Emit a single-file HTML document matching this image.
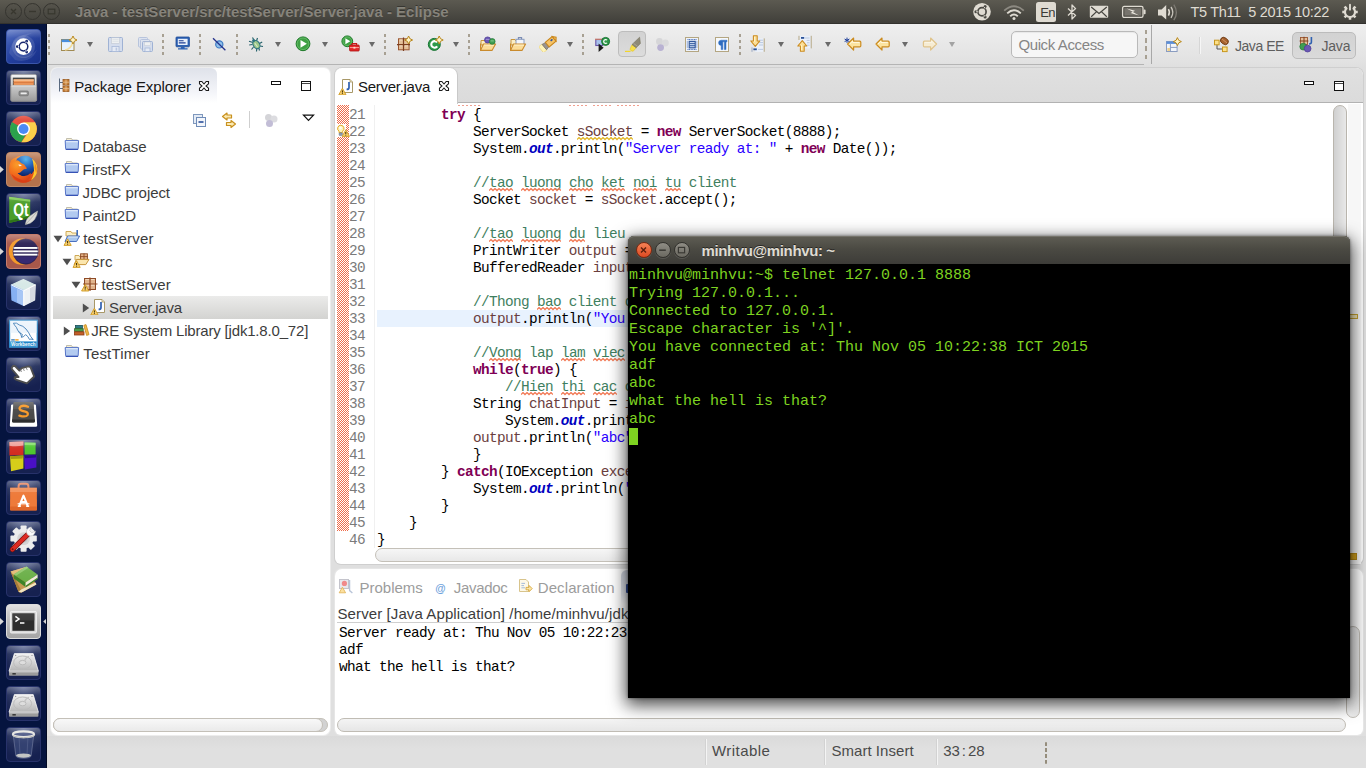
<!DOCTYPE html>
<html>
<head>
<meta charset="utf-8">
<title>Eclipse</title>
<style>
*{box-sizing:border-box;margin:0;padding:0}
html,body{width:1366px;height:768px;overflow:hidden;background:#dedede;font-family:"Liberation Sans",sans-serif;}
.abs{position:absolute}
#root{position:absolute;left:0;top:0;width:1366px;height:768px;overflow:hidden;background:#dfdfdf}
/* top panel */
#panel{left:0;top:0;width:1366px;height:24px;background:linear-gradient(#5c5a51,#3f3e39);}
#panel .title{left:75px;top:2px;font-size:15px;font-weight:bold;color:#86837b;white-space:nowrap;line-height:20px;letter-spacing:0px}
.wbtn{width:17px;height:17px;border-radius:50%;top:3px;border:1px solid #35342f;background:linear-gradient(#55534b,#46453f)}
/* launcher */
#launcher{left:0;top:24px;width:47px;height:744px;background:#05143f}
.tile{left:6px;width:35px;height:35px;border-radius:4px;background:linear-gradient(#2a3466,#151d4e);box-shadow:inset 0 0 0 1px rgba(255,255,255,.10)}
/* toolbar */
#toolbar{left:47px;top:24px;width:1319px;height:44px;background:linear-gradient(#efefef,#e1e1e1 90%,#dfdfdf)}
.tsep{top:33px;width:2px;height:22px;background:repeating-linear-gradient(#a09889 0 3px,transparent 3px 6.1px);opacity:.9}
.dd{width:0;height:0;border-left:3.5px solid transparent;border-right:3.5px solid transparent;border-top:5px solid #6a6a6a;top:42px}
/* views */
.view{background:#fff;border-radius:6px 6px 3px 3px;box-shadow:0 0 0 1px #ececec}
.ui{font-size:15px;color:#3c3c3c;white-space:nowrap;line-height:20px}
.mono{font-family:"Liberation Mono",monospace;white-space:pre}

.ln{font-size:14.4px;letter-spacing:-.642px;line-height:17px;height:17px;color:#7a7a7a}
.code{font-size:14.4px;letter-spacing:-.642px;line-height:17px;height:17px;color:#000}
.code b{font-weight:bold}
.k{color:#7f0055}.s{color:#2a00ff}.v{color:#6a3e3e}.c{color:#3f7f5f}.o{color:#0000c0;font-style:italic}
.term{font-size:15px;letter-spacing:0;line-height:18px;height:18px;color:#7ed321}
</style>
</head>
<body>
<div id="root">

<!-- ECLIPSE TOOLBAR -->
<div id="toolbar" class="abs"></div>
<div class="abs tsep" style="left:47.7px;top:33.8px"></div>
<svg class="abs" style="left:60px;top:35px" width="18" height="17" viewBox="0 0 18 17"><rect x="1.5" y="4.5" width="12.5" height="11" fill="#eaf3fc" stroke="#a08a52" stroke-width="1"/><rect x="1.5" y="4.5" width="12.5" height="2.6" fill="#4a8fdc"/><path d="M5 15Q11 14 12.5 8" stroke="#f4dd9a" stroke-width="1.6" fill="none"/><path d="M13 1l1.3 2.7l2.7 1.3l-2.7 1.3l-1.3 2.7l-1.3-2.7l-2.7-1.3l2.7-1.3z" fill="#fdf3c8" stroke="#b8861a" stroke-width="1" stroke-linejoin="round"/></svg>
<div class="abs dd" style="left:87px;opacity:1"></div>
<svg class="abs" style="left:107px;top:36px" width="17" height="17" viewBox="0 0 17 17"><path d="M2.5 1.5H14.5Q15.5 1.5 15.5 2.5V14.5Q15.5 15.5 14.5 15.5H2.5Q1.5 15.5 1.5 14.5V2.5Q1.5 1.5 2.5 1.5Z" fill="#d5dded" stroke="#9fb2d4" stroke-width="1"/><rect x="4.5" y="1.8" width="8" height="5.6" fill="#eef0f2" stroke="#c2c8d2" stroke-width=".6"/><path d="M5.5 3.5H11.5M5.5 5.3H11.5" stroke="#d8dce2" stroke-width=".7"/><rect x="5" y="10.5" width="7" height="5" fill="#e6ebf5" stroke="#a9b9d8" stroke-width=".8"/><rect x="8.6" y="11.6" width="1.6" height="3" fill="#b8c6e0"/></svg>
<svg class="abs" style="left:137px;top:36px" width="17" height="17" viewBox="0 0 17 17"><rect x="1.5" y="1.5" width="9" height="9.5" rx="1" fill="#dde3ef" stroke="#b2c0da" stroke-width=".9"/><rect x="3.5" y="3.5" width="9" height="9.5" rx="1" fill="#dde3ef" stroke="#b2c0da" stroke-width=".9"/><rect x="5.5" y="5.5" width="10" height="10" rx="1" fill="#d5dded" stroke="#9fb2d4" stroke-width="1"/><rect x="7.5" y="6" width="6" height="3.6" fill="#eef0f2" stroke="#c2c8d2" stroke-width=".5"/><rect x="8" y="12" width="5" height="3.5" fill="#e6ebf5" stroke="#a9b9d8" stroke-width=".8"/></svg>
<div class="abs tsep" style="left:161.7px;top:33.8px"></div>
<svg class="abs" style="left:175px;top:36px" width="16" height="15" viewBox="0 0 16 15"><rect x="1" y="1" width="13.4" height="9.8" rx=".8" fill="#2d62b4" stroke="#1d4a94" stroke-width=".8"/><rect x="2.8" y="2.8" width="9.8" height="6.2" fill="#e8effa"/><path d="M3.8 4.8H8.6M3.8 6.9H10.6" stroke="#1c3f94" stroke-width="1.1"/><path d="M5.8 11v1.2H3v1.3h9.6v-1.3H9.6V11z" fill="#2d62b4"/></svg>
<div class="abs tsep" style="left:198.7px;top:33.8px"></div>
<svg class="abs" style="left:212px;top:37px" width="15" height="15" viewBox="0 0 15 15"><circle cx="7.3" cy="7.4" r="3.6" fill="#8fc0ea" stroke="#3f7cc4" stroke-width="1.2"/><path d="M1 1.2L13.4 13.2" stroke="#26338c" stroke-width="1.3"/></svg>
<div class="abs tsep" style="left:235.7px;top:33.8px"></div>
<svg class="abs" style="left:248px;top:36px" width="17" height="17" viewBox="0 0 17 17"><path d="M4.5 1.5L6.5 5M9.5 2L8.5 5M1 5.2L5 6.5M14.2 6L11.5 7.5M1.2 9L4.5 8.5M15 10.5L12 10M3.5 13.5L5.5 11M8.5 15.5L8.8 12.5M11.5 14.5L10.8 12" stroke="#24606a" stroke-width="1.15" fill="none"/><ellipse cx="8.4" cy="8.6" rx="3.2" ry="4.4" transform="rotate(-32 8.4 8.6)" fill="#9cc68a" stroke="#2e7480" stroke-width="1.1"/><path d="M6.8 7.2L9.6 11" stroke="#d4eac8" stroke-width="1.1"/><circle cx="5.6" cy="4.6" r="1.5" fill="#2e7480"/></svg>
<div class="abs dd" style="left:275px;opacity:1"></div>
<svg class="abs" style="left:295px;top:36px" width="16" height="16" viewBox="0 0 16 16"><circle cx="8" cy="7.8" r="6.9" fill="#3fa044" stroke="#1f7a2a" stroke-width="1"/><circle cx="8" cy="7.8" r="5.800000000000001" fill="none" stroke="#6cc26e" stroke-width=".7"/><path d="M5.516 3.935999999999999V11.664000000000001L11.864 7.8Z" fill="#fff"/></svg>
<div class="abs dd" style="left:322px;opacity:1"></div>
<svg class="abs" style="left:341px;top:35px" width="20" height="17" viewBox="0 0 20 17"><circle cx="6.3" cy="6.3" r="5.4" fill="#3fa044" stroke="#1f7a2a" stroke-width="1"/><circle cx="6.3" cy="6.3" r="4.300000000000001" fill="none" stroke="#6cc26e" stroke-width=".7"/><path d="M4.356 3.2759999999999994V9.324L9.324 6.3Z" fill="#fff"/><rect x="8.6" y="10" width="9.6" height="6" rx=".8" fill="#e02828" stroke="#b01010" stroke-width=".8"/><path d="M11.2 10V8.6H15.6V10" fill="none" stroke="#c81818" stroke-width="1.1"/><path d="M8.8 12.6H18" stroke="#ffb0a8" stroke-width=".9"/><rect x="12.4" y="11.8" width="2" height="1.8" fill="#ffd8d0"/></svg>
<div class="abs dd" style="left:369px;opacity:1"></div>
<div class="abs tsep" style="left:383.7px;top:33.8px"></div>
<svg class="abs" style="left:396px;top:35px" width="18" height="17" viewBox="0 0 18 17"><rect x="2.5" y="3.8" width="10.6" height="11" fill="#e4bf98" stroke="#9a5630" stroke-width="1"/><path d="M7.5 2.5V16M1 9.6H14" stroke="#7c3e1e" stroke-width="1.2"/><path d="M3.6 5H6.4M8.8 5H12M3.6 10.9H6.4M8.8 10.9H12" stroke="#f6e2cc" stroke-width=".9"/><path d="M12.6 1l1.3 2.7l2.7 1.3l-2.7 1.3l-1.3 2.7l-1.3-2.7l-2.7-1.3l2.7-1.3z" fill="#fdf3c8" stroke="#b8861a" stroke-width="1" stroke-linejoin="round"/></svg>
<svg class="abs" style="left:427px;top:35px" width="17" height="17" viewBox="0 0 17 17"><circle cx="7.3" cy="9.4" r="6" fill="#2e9a4a" stroke="#1a7434" stroke-width="1"/><path d="M10.2 7.4A3.3 3.3 0 1 0 10.2 11.4" fill="none" stroke="#fff" stroke-width="2.1"/><path d="M12.2 1l1.3 2.7l2.7 1.3l-2.7 1.3l-1.3 2.7l-1.3-2.7l-2.7-1.3l2.7-1.3z" fill="#fdf3c8" stroke="#b8861a" stroke-width="1" stroke-linejoin="round"/></svg>
<div class="abs dd" style="left:453px;opacity:1"></div>
<div class="abs tsep" style="left:467.7px;top:33.8px"></div>
<svg class="abs" style="left:479px;top:35px" width="18" height="17" viewBox="0 0 18 17"><path d="M2 5.5H7L8 7H13V10H2Z" fill="#fbeec4" stroke="#c9963c" stroke-width="1"/><path d="M1.5 15V8.5" stroke="#c98a2c" stroke-width="1"/><path d="M4.4 9H16.6L13 15.4H1.5Z" fill="#fbdc98" stroke="#c98a2c" stroke-width="1.1" stroke-linejoin="round"/><path d="M5 10.1H15" stroke="#fff2cc" stroke-width=".9"/><circle cx="8.6" cy="5" r="3.1" fill="#6a58b4" stroke="#4a3a94" stroke-width=".7"/><circle cx="13.2" cy="6.4" r="2.9" fill="#3f9e52" stroke="#247a38" stroke-width=".7"/><path d="M6.8 4.4H10.4" stroke="#a89ad8" stroke-width=".9"/><path d="M11.6 5.9H14.8" stroke="#8cd09a" stroke-width=".9"/></svg>
<svg class="abs" style="left:509px;top:36px" width="18" height="16" viewBox="0 0 18 16"><path d="M2 3.5H6L7 5H9V9H2Z" fill="#fbeec4" stroke="#c9963c" stroke-width="1"/><rect x="7" y="3.3" width="8" height="6" fill="#f2f5fb" stroke="#8a9cc0" stroke-width="1"/><path d="M9.4 3.3V1.6H12.6V3.3" fill="none" stroke="#7a8cb4" stroke-width="1.1"/><path d="M1.5 14V7.5" stroke="#c98a2c" stroke-width="1"/><path d="M4.4 8H16.6L13 14.4H1.5Z" fill="#fbdc98" stroke="#c98a2c" stroke-width="1.1" stroke-linejoin="round"/><path d="M5 9.1H15" stroke="#fff2cc" stroke-width=".9"/></svg>
<svg class="abs" style="left:539px;top:35px" width="19" height="17" viewBox="0 0 19 17"><g transform="rotate(-40 9 9)"><rect x="0" y="5.2" width="4.6" height="7.6" fill="#fff4b8" stroke="#e8d070" stroke-width=".6"/><path d="M4.2 5.6L8 6.4V11.6L4.2 12.4Z" fill="#9a948e" stroke="#7a746e" stroke-width=".8"/><rect x="8" y="6" width="9" height="6" fill="#f6c366" stroke="#c8861c" stroke-width="1"/><path d="M17 6L19.6 9L17 12Z" fill="#f6c366" stroke="#c8861c" stroke-width="1"/><rect x="13" y="7.6" width="2.4" height="1.4" fill="#2a4ea0"/></g></svg>
<div class="abs dd" style="left:567px;opacity:1"></div>
<div class="abs tsep" style="left:581.7px;top:33.8px"></div>
<svg class="abs" style="left:594px;top:36px" width="17" height="17" viewBox="0 0 17 17"><rect x="1.8" y="3.5" width="7" height="6" fill="#a8c2ec" stroke="#6a54a8" stroke-width="1.1"/><path d="M1 3.3H9.6" stroke="#c87a6a" stroke-width="1.2"/><path d="M4.6 7.5V16L9.6 11.8Z" fill="#1a1a1a"/><circle cx="11.6" cy="5.4" r="4" fill="#2e9a4a" stroke="#1a7434" stroke-width="1"/><path d="M13 4.2A1.9 1.9 0 1 0 13 6.8" fill="none" stroke="#fff" stroke-width="1.2"/></svg>
<div class="abs" style="left:618px;top:31px;width:28px;height:26px;border-radius:4px;background:linear-gradient(#d2d2d2,#dcdcdc);border:1px solid #bdbdbd"></div>
<svg class="abs" style="left:624px;top:36px" width="18" height="17" viewBox="0 0 18 17"><path d="M1 15.4H6.5" stroke="#f2d62a" stroke-width="1.2"/><path d="M6 13.2L8 8.6L12.2 11.8L9.2 15.2Q7 15.6 6 13.2Z" fill="#f7e04a" stroke="#e4c420" stroke-width=".6"/><path d="M8 8.6L15.6 1.2L16.4 7.4L12.2 11.8Z" fill="#8e8a78" stroke="#76725e" stroke-width=".6"/><path d="M9.6 7.4L13.6 10.4" stroke="#b4b09c" stroke-width=".8"/></svg>
<svg class="abs" style="left:655px;top:37px" width="15" height="15" viewBox="0 0 15 15"><circle cx="4.4" cy="4.4" r="3.4" fill="#d6d6d8"/><circle cx="10.4" cy="6" r="3.4" fill="#dadadc"/><circle cx="5.6" cy="10.6" r="3.4" fill="#b9b2d2"/></svg>
<svg class="abs" style="left:684px;top:36px" width="16" height="17" viewBox="0 0 16 17"><rect x="1.5" y="1.5" width="13" height="14" fill="#eef3fb" stroke="#b4a682" stroke-width="1"/><path d="M3.5 3.6H12.5M3.5 13.4H12.5" stroke="#3a62b0" stroke-width="1" stroke-dasharray="1 .6"/><rect x="5.2" y="5.4" width="6" height="6.4" fill="#c9d8f0" stroke="#2a5298" stroke-width="1.1"/><path d="M5.4 7.6H11M5.4 9.7H11" stroke="#2a5298" stroke-width=".9"/><path d="M3.3 5.5V12" stroke="#3a62b0" stroke-width=".9" stroke-dasharray="1 1"/><path d="M12.9 5.5V12" stroke="#3a62b0" stroke-width=".9" stroke-dasharray="1 1"/></svg>
<svg class="abs" style="left:714px;top:36px" width="16" height="17" viewBox="0 0 16 17"><rect x="1.5" y="1.5" width="13" height="14" fill="#f6f9fd" stroke="#b4a682" stroke-width="1"/><path d="M13 4.2H7.2A2.6 2.6 0 0 0 7.2 9.4V13.6H8.8V5.8H10.4V13.6H12V5.8H13Z" fill="#2d6cc0" stroke="#2d6cc0" stroke-width=".5"/></svg>
<div class="abs tsep" style="left:738.7px;top:33.8px"></div>
<svg class="abs" style="left:750px;top:35px" width="16" height="18" viewBox="0 0 16 18"><rect x="5.2" y="3.4" width="9" height="13.4" fill="#eaf0fa"/><path d="M14.2 3.4V16.8" stroke="#b4a682" stroke-width="1"/><path d="M2 12.4V16.8" stroke="#9aa8c4" stroke-width="1"/><path d="M9 5.2H13M9 7.6H13M9 10H13M8 14.4H13" stroke="#b6c4de" stroke-width=".9"/><rect x="3.4" y="13.4" width="3.4" height="1.8" fill="#2a5298"/><path d="M3.4 .8H7.2V6H9.8L5.3 11.4L.8 6H3.4Z" fill="#fce09a" stroke="#cc8c20" stroke-width="1.1" stroke-linejoin="round"/><path d="M4.5 1.8V7" stroke="#fff2c4" stroke-width="1"/></svg>
<div class="abs dd" style="left:778px;opacity:1"></div>
<svg class="abs" style="left:797px;top:35px" width="16" height="18" viewBox="0 0 16 18"><rect x="2" y=".8" width="12" height="12.6" fill="#eaf0fa"/><path d="M14.2 .8V13.4M2 .8V5" stroke="#b4a682" stroke-width="1"/><path d="M8 3H12.6M9.6 5.4H12.6M10 7.8H12.6M10 10.2H12.6" stroke="#b6c4de" stroke-width=".9"/><rect x="4" y="2" width="3.2" height="1.8" fill="#2a5298"/><path d="M3.4 16.2H7.2V11H9.8L5.3 5.6L.8 11H3.4Z" fill="#fce09a" stroke="#cc8c20" stroke-width="1.1" stroke-linejoin="round"/><path d="M4.5 15.2V10" stroke="#fff2c4" stroke-width="1"/></svg>
<div class="abs dd" style="left:825px;opacity:1"></div>
<svg class="abs" style="left:844px;top:37px" width="18" height="14" viewBox="0 0 18 14"><g transform="translate(2.6 0)"><path d="M7 1L1 7L7 13V9.8H13.2Q14.2 9.8 14.2 8.8V5.2Q14.2 4.2 13.2 4.2H7Z" fill="#fce4a0" stroke="#cc8c20" stroke-width="1.2" stroke-linejoin="round"/><path d="M3 7L6 4.2V5.4H12.8" stroke="#fffae4" stroke-width="1" fill="none"/></g><path d="M3 .6V5.8M.6 2L5.4 4.6M5.4 2L.6 4.6" stroke="#1e3f9a" stroke-width="1"/></svg>
<svg class="abs" style="left:875px;top:37px" width="16" height="14" viewBox="0 0 16 14"><path d="M7 1L1 7L7 13V9.8H13.2Q14.2 9.8 14.2 8.8V5.2Q14.2 4.2 13.2 4.2H7Z" fill="#fce4a0" stroke="#cc8c20" stroke-width="1.2" stroke-linejoin="round"/><path d="M3 7L6 4.2V5.4H12.8" stroke="#fffae4" stroke-width="1" fill="none"/></svg>
<div class="abs dd" style="left:902px;opacity:1"></div>
<svg class="abs" style="left:922px;top:37px" width="16" height="14" viewBox="0 0 16 14"><g transform="translate(15.6 0) scale(-1 1)"><path d="M7 1L1 7L7 13V9.8H13.2Q14.2 9.8 14.2 8.8V5.2Q14.2 4.2 13.2 4.2H7Z" fill="#f6ecd2" stroke="#e0c48c" stroke-width="1.2" stroke-linejoin="round"/><path d="M3 7L6 4.2V5.4H12.8" stroke="#fbf6e8" stroke-width="1" fill="none"/></g></svg>
<div class="abs dd" style="left:949px;opacity:0.55"></div>
<div class="abs" style="left:1011px;top:31px;width:127px;height:27px;border:1px solid #b9b9b9;border-radius:5px;background:#f6f6f6;box-shadow:inset 0 1px 1px rgba(0,0,0,.06)"></div>
<div class="abs ui" id="qa" style="left:1018.4px;top:34px;font-size:15px;color:#858585;line-height:22px;letter-spacing:-.37px">Quick Access</div>
<div class="abs" style="left:1145px;top:30px;width:2px;height:30px;background:repeating-linear-gradient(#a09889 0 4.3px,transparent 4.3px 8.2px);opacity:.9"></div>
<div class="abs" style="left:48px;top:64px;width:1096px;height:1px;background:#b4b4b4"></div>
<div class="abs" style="left:1151px;top:25px;width:1px;height:39px;background:#a8a8a8"></div>
<svg class="abs" style="left:1165px;top:37px" width="17" height="16" viewBox="0 0 17 16"><rect x="1.5" y="4.5" width="10.6" height="10" fill="#f2f5fa" stroke="#8a9cc0" stroke-width="1"/><rect x="1.5" y="4.5" width="10.6" height="2.4" fill="#5a8ed8"/><path d="M5.4 7V14.5M5.4 10.4H12" stroke="#8a9cc0" stroke-width="1"/><rect x="2.4" y="11" width="2.6" height="3" fill="#f0d088"/><path d="M12.4 0.5999999999999996l1.3 2.7l2.7 1.3l-2.7 1.3l-1.3 2.7l-1.3-2.7l-2.7-1.3l2.7-1.3z" fill="#fdf3c8" stroke="#b8861a" stroke-width="1" stroke-linejoin="round"/></svg>
<div class="abs" style="left:1199px;top:37px;width:1px;height:17px;background:#d6d6d6"></div><div class="abs" style="left:1200px;top:37px;width:1px;height:17px;background:#f6f6f6"></div>
<svg class="abs" style="left:1213px;top:36px" width="17" height="17" viewBox="0 0 17 17"><path d="M4 7.5V13H10" stroke="#555" stroke-width="1" fill="none"/><rect x="1.5" y="4.2" width="4.6" height="4.6" fill="#fbe08a" stroke="#c8961c" stroke-width="1"/><rect x="9.5" y="11" width="4.6" height="4.6" fill="#fbe08a" stroke="#c8961c" stroke-width="1"/><ellipse cx="11.4" cy="5" rx="4.2" ry="3.2" transform="rotate(35 11.4 5)" fill="#a8622e" stroke="#6e3a14" stroke-width=".9"/><path d="M9 3L14 7" stroke="#d8a070" stroke-width=".8"/></svg>
<div class="abs ui" id="jee" style="left:1235px;top:35px;font-size:14px;color:#5e5e5e;line-height:22px;letter-spacing:-.46px">Java EE</div>
<div class="abs" style="left:1292px;top:32px;width:64px;height:27px;border-radius:5px;background:linear-gradient(#d2d2d2,#dadada);border:1px solid #bcbcbc"></div>
<svg class="abs" style="left:1298px;top:36px" width="17" height="17" viewBox="0 0 17 17"><rect x="2.5" y="1.5" width="7" height="7" fill="#e4bf98" stroke="#9a5630" stroke-width=".9"/><path d="M6 .8V9.4M1.6 5H10.4" stroke="#7c3e1e" stroke-width="1"/><path d="M13.4 1v5q0 2-2.4 2" fill="none" stroke="#2f60b0" stroke-width="1.6"/><circle cx="5.2" cy="10.6" r="3.4" fill="#3f9e52" stroke="#247a38" stroke-width=".7"/><circle cx="9.6" cy="12.6" r="3.4" fill="#6a58b4" stroke="#4a3a94" stroke-width=".7"/></svg>
<div class="abs ui" id="jv" style="left:1321.4px;top:35px;font-size:14px;color:#5e5e5e;line-height:22px;letter-spacing:-.18px">Java</div>

<!-- PACKAGE EXPLORER -->
<div class="abs view" style="left:51px;top:68px;width:279px;height:667px;border-radius:6px 6px 7px 7px"></div>
<div class="abs" style="left:51px;top:68px;width:166px;height:35px;border-radius:6px 6px 0 0;background:linear-gradient(#dfe2ea,#f4f5f9 70%,#fff)"></div>
<!-- package icon -->
<svg class="abs" style="left:58px;top:78px" width="12" height="15" viewBox="0 0 12 15">
<path d="M1.5 0.5V13.5M1.5 4.5H5M1.5 10.5H5" stroke="#5a6a80" stroke-width="1" fill="none"/>
<rect x="5" y="1.5" width="6" height="5.5" fill="#c8803a" stroke="#9a5a20" stroke-width=".8"/>
<rect x="5" y="8" width="6" height="5.5" fill="#c8803a" stroke="#9a5a20" stroke-width=".8"/>
<path d="M8 1.5V7M5 4.2H11M8 8V13.5M5 10.7H11" stroke="#f0d0a0" stroke-width=".7"/>
</svg>
<div class="abs ui" id="pe-title" style="left:74.2px;top:77px;color:#161616;font-size:15px;letter-spacing:-.1px">Package Explorer</div>
<svg class="abs" style="left:198px;top:80px" width="12" height="12" viewBox="0 0 12 12"><path d="M1.5 1.5L3.8 1.5L6 4L8.2 1.5L10.5 1.5L10.5 3.8L8 6L10.5 8.2L10.5 10.5L8.2 10.5L6 8L3.8 10.5L1.5 10.5L1.5 8.2L4 6L1.5 3.8Z" fill="#fff" stroke="#1c1c1c" stroke-width="1.1"/></svg>
<div class="abs" style="left:271px;top:81px;width:10px;height:4px;border:1.3px solid #111;background:#fff"></div>
<div class="abs" style="left:301px;top:81px;width:10px;height:10px;border:1.3px solid #111;background:#fff;box-shadow:inset 0 1px 0 #fff,inset 0 2px 0 #444"></div>
<!-- view toolbar icons -->
<svg class="abs" style="left:192px;top:113px" width="15" height="15" viewBox="0 0 15 15">
<rect x="1.5" y="1.5" width="9" height="9" fill="#e4ebf5" stroke="#7f98bd"/>
<rect x="4.5" y="4.5" width="9" height="9" fill="#f3f6fb" stroke="#6f8cb8"/>
<path d="M6.5 9H11.5" stroke="#2a4f9a" stroke-width="1.6"/>
</svg>
<svg class="abs" style="left:221px;top:112px" width="16" height="17" viewBox="0 0 16 17">
<path d="M6 1L1.5 4.5L6 8V6H10.5V3H6Z" fill="#fbe9b0" stroke="#c8901e" stroke-width="1.2" stroke-linejoin="round"/>
<path d="M10 8.5L14.5 12L10 15.5V13.5H5.5V10.5H10Z" fill="#fbe9b0" stroke="#c8901e" stroke-width="1.2" stroke-linejoin="round"/>
</svg>
<div class="abs" style="left:249px;top:111px;width:1px;height:17px;background:#cfcfcf"></div>
<svg class="abs" style="left:264px;top:113px" width="15" height="15" viewBox="0 0 15 15">
<circle cx="4.5" cy="4.5" r="3.5" fill="#d4d4d8"/><circle cx="10" cy="6" r="3.5" fill="#dcdce0"/><circle cx="5.5" cy="10.5" r="3.5" fill="#c2bdd6"/>
</svg>
<svg class="abs" style="left:302px;top:114px" width="13" height="8" viewBox="0 0 13 8"><path d="M1.5 1.2H11.5L6.5 6.3Z" fill="#fff" stroke="#111" stroke-width="1.2" stroke-linejoin="miter"/></svg>
<!-- tree -->
<div class="abs" style="left:53px;top:296px;width:275px;height:23px;background:linear-gradient(#ebebea,#d3d3d1)"></div>
<svg class="abs" style="left:64px;top:137px" width="16" height="14" viewBox="0 0 16 14"><path d="M2.5 1.5H7.5L8.5 3H13.5V4H2.5Z" fill="#f8f0d4" stroke="#b4b0a0" stroke-width=".8"/><path d="M1.2 3.6H14.6L14.2 11.6Q14.1 12.4 13.3 12.4H2.5Q1.7 12.4 1.6 11.6Z" fill="#b2caf0" stroke="#5876c8" stroke-width="1"/><path d="M2 4.7H13.8" stroke="#e6effc" stroke-width="1.1"/><path d="M1.7 12.3H14.1" stroke="#2f4bb0" stroke-width="1.1"/></svg>
<div class="abs ui" id="t0" style="left:82.5px;top:137px;letter-spacing:-0.02px">Database</div>
<svg class="abs" style="left:64px;top:160px" width="16" height="14" viewBox="0 0 16 14"><path d="M2.5 1.5H7.5L8.5 3H13.5V4H2.5Z" fill="#f8f0d4" stroke="#b4b0a0" stroke-width=".8"/><path d="M1.2 3.6H14.6L14.2 11.6Q14.1 12.4 13.3 12.4H2.5Q1.7 12.4 1.6 11.6Z" fill="#b2caf0" stroke="#5876c8" stroke-width="1"/><path d="M2 4.7H13.8" stroke="#e6effc" stroke-width="1.1"/><path d="M1.7 12.3H14.1" stroke="#2f4bb0" stroke-width="1.1"/></svg>
<div class="abs ui" id="t1" style="left:82.5px;top:160px;letter-spacing:-0.0px">FirstFX</div>
<svg class="abs" style="left:64px;top:183px" width="16" height="14" viewBox="0 0 16 14"><path d="M2.5 1.5H7.5L8.5 3H13.5V4H2.5Z" fill="#f8f0d4" stroke="#b4b0a0" stroke-width=".8"/><path d="M1.2 3.6H14.6L14.2 11.6Q14.1 12.4 13.3 12.4H2.5Q1.7 12.4 1.6 11.6Z" fill="#b2caf0" stroke="#5876c8" stroke-width="1"/><path d="M2 4.7H13.8" stroke="#e6effc" stroke-width="1.1"/><path d="M1.7 12.3H14.1" stroke="#2f4bb0" stroke-width="1.1"/></svg>
<div class="abs ui" id="t2" style="left:82.5px;top:183px;letter-spacing:-0.08px">JDBC project</div>
<svg class="abs" style="left:64px;top:206px" width="16" height="14" viewBox="0 0 16 14"><path d="M2.5 1.5H7.5L8.5 3H13.5V4H2.5Z" fill="#f8f0d4" stroke="#b4b0a0" stroke-width=".8"/><path d="M1.2 3.6H14.6L14.2 11.6Q14.1 12.4 13.3 12.4H2.5Q1.7 12.4 1.6 11.6Z" fill="#b2caf0" stroke="#5876c8" stroke-width="1"/><path d="M2 4.7H13.8" stroke="#e6effc" stroke-width="1.1"/><path d="M1.7 12.3H14.1" stroke="#2f4bb0" stroke-width="1.1"/></svg>
<div class="abs ui" id="t3" style="left:82.5px;top:206px;letter-spacing:0.02px">Paint2D</div>
<svg class="abs" style="left:53px;top:235px" width="10" height="8" viewBox="0 0 10 8"><path d="M.5 .8H9.5L5 7.2Z" fill="#4f4f4f"/></svg>
<svg class="abs" style="left:63px;top:229px" width="18" height="17" viewBox="0 0 18 17"><path d="M3 2.5H8L9 4H13.5V7H3Z" fill="#fbeec4" stroke="#c9a24a" stroke-width=".9"/><path d="M14.2 1v5.2q0 2-2.3 2" fill="none" stroke="#3565b5" stroke-width="1.5"/><path d="M4.6 7H16.6L13.6 12.5H2Z" fill="#a8c6ee" stroke="#4a70c0" stroke-width="1" stroke-linejoin="round"/><path d="M5.2 8H15" stroke="#e3eefb" stroke-width=".9"/><path d="M4.6 9.799999999999999l3.6 6.6h-7.2z" fill="#f8d070" stroke="#d09a20" stroke-width=".9" stroke-linejoin="round"/><path d="M4.6 12.0v2.2M4.6 14.799999999999999v.8" stroke="#3a2a00" stroke-width="1"/></svg>
<div class="abs ui" id="t4" style="left:83.2px;top:229px;letter-spacing:0.22px">testServer</div>
<svg class="abs" style="left:62px;top:258px" width="10" height="8" viewBox="0 0 10 8"><path d="M.5 .8H9.5L5 7.2Z" fill="#4f4f4f"/></svg>
<svg class="abs" style="left:72px;top:253px" width="18" height="17" viewBox="0 0 18 17"><path d="M3 2.5H7L8 4H12.5V7H3Z" fill="#fbeec4" stroke="#c9a24a" stroke-width=".9"/><rect x="8.6" y=".8" width="6.8" height="5.6" fill="#e4b48a" stroke="#8c4a22" stroke-width=".9"/><path d="M12 .4V6.6M8 3.6H16" stroke="#8c4a22" stroke-width=".9"/><path d="M4.6 6.4H17L13.8 11.6H2Z" fill="#fbe6ae" stroke="#c8963c" stroke-width="1" stroke-linejoin="round"/><path d="M4.6 7.800000000000001l3.6 6.6h-7.2z" fill="#f8d070" stroke="#d09a20" stroke-width=".9" stroke-linejoin="round"/><path d="M4.6 10.0v2.2M4.6 12.8v.8" stroke="#3a2a00" stroke-width="1"/></svg>
<div class="abs ui" id="t5" style="left:92px;top:252px;letter-spacing:0.3px">src</div>
<svg class="abs" style="left:71px;top:281px" width="10" height="8" viewBox="0 0 10 8"><path d="M.5 .8H9.5L5 7.2Z" fill="#4f4f4f"/></svg>
<svg class="abs" style="left:81px;top:277px" width="17" height="17" viewBox="0 0 17 17"><rect x="3.5" y="1.5" width="11" height="11" fill="#e0b48c" stroke="#8e4a26" stroke-width="1"/><path d="M9 0.5V14M2 7H16.5" stroke="#8e4a26" stroke-width="1.2"/><path d="M4.5 2.5H8M10 2.5H13.5M4.5 8.3H8M10 8.3H13.5" stroke="#f4dcc4" stroke-width=".9"/><path d="M4.2 7.4l3.6 6.6h-7.2z" fill="#f8d070" stroke="#d09a20" stroke-width=".9" stroke-linejoin="round"/><path d="M4.2 9.600000000000001v2.2M4.2 12.4v.8" stroke="#3a2a00" stroke-width="1"/></svg>
<div class="abs ui" id="t6" style="left:101.5px;top:275px;letter-spacing:0.1px">testServer</div>
<svg class="abs" style="left:82px;top:303px" width="8" height="10" viewBox="0 0 8 10"><path d="M.8 .5V9.5L7.2 5Z" fill="#4f4f4f"/></svg>
<svg class="abs" style="left:90px;top:298px" width="17" height="17" viewBox="0 0 17 17"><path d="M4.5 1.5H12L14.5 4V14.5H4.5Z" fill="#fff" stroke="#a89868" stroke-width="1"/><path d="M12 1.5V4H14.5" fill="#f0e8c8" stroke="#a89868" stroke-width=".8"/><path d="M11 4v5.4q0 2-2.4 2" fill="none" stroke="#2f60b0" stroke-width="1.7"/><path d="M4.4 10.2l3.6 6.6h-7.2z" fill="#f8d070" stroke="#d09a20" stroke-width=".9" stroke-linejoin="round"/><path d="M4.4 12.399999999999999v2.2M4.4 15.2v.8" stroke="#3a2a00" stroke-width="1"/></svg>
<div class="abs ui" id="t7" style="left:109.1px;top:298px;letter-spacing:-0.2px">Server.java</div>
<svg class="abs" style="left:63px;top:326px" width="8" height="10" viewBox="0 0 8 10"><path d="M.8 .5V9.5L7.2 5Z" fill="#4f4f4f"/></svg>
<svg class="abs" style="left:72.6px;top:324px" width="17" height="13" viewBox="0 0 17 13"><rect x="2.4" y="1.4" width="7" height="2.8" fill="#2f7f86" stroke="#1d4f58" stroke-width=".8"/><rect x="1.6" y="4.6" width="8.6" height="2.8" fill="#4a9a4a" stroke="#2b642b" stroke-width=".8"/><rect x="1.4" y="7.8" width="9.6" height="3.2" fill="#c4602a" stroke="#8a3c14" stroke-width=".8"/><path d="M10.8 1.4L13 .6L16 10.6L13.6 11.4Z" fill="#f2b84c" stroke="#c58a1a" stroke-width=".8"/></svg>
<div class="abs ui" id="t8" style="left:91.3px;top:321px;letter-spacing:-0.18px">JRE System Library [jdk1.8.0_72]</div>
<svg class="abs" style="left:64px;top:344px" width="16" height="14" viewBox="0 0 16 14"><path d="M2.5 1.5H7.5L8.5 3H13.5V4H2.5Z" fill="#f8f0d4" stroke="#b4b0a0" stroke-width=".8"/><path d="M1.2 3.6H14.6L14.2 11.6Q14.1 12.4 13.3 12.4H2.5Q1.7 12.4 1.6 11.6Z" fill="#b2caf0" stroke="#5876c8" stroke-width="1"/><path d="M2 4.7H13.8" stroke="#e6effc" stroke-width="1.1"/><path d="M1.7 12.3H14.1" stroke="#2f4bb0" stroke-width="1.1"/></svg>
<div class="abs ui" id="t9" style="left:83.3px;top:344px;letter-spacing:0.15px">TestTimer</div>
<!-- hscroll -->
<div class="abs" style="left:53px;top:718px;width:275px;height:14px;border:1px solid #c4c0b8;border-radius:7px;background:#d2d2d2"></div>
<div class="abs" style="left:53px;top:718px;width:270px;height:14px;border:1px solid #c4c0b8;border-radius:7px;background:linear-gradient(#f8f8f8,#eaeaea)"></div>


<!-- EDITOR -->
<div class="abs" style="left:335px;top:68px;width:1028px;height:496px;border-radius:7px 7px 6px 6px;background:#fff;box-shadow:0 0 0 1px #cfcfcf"></div>
<div class="abs" style="left:335px;top:68px;width:1028px;height:35px;border-radius:7px 7px 0 0;background:linear-gradient(#e0e0e0,#dbdbdb);border-bottom:1px solid #b2b2b2"></div>
<div class="abs" style="left:335px;top:68px;width:122px;height:36px;border-radius:7px 7px 0 0;background:#fff;box-shadow:1px 0 0 #c9c9c9"></div>
<svg class="abs" style="left:338px;top:78px" width="17" height="17" viewBox="0 0 17 17"><path d="M4.5 1.5H12L14.5 4V14.5H4.5Z" fill="#fff" stroke="#a89868" stroke-width="1"/><path d="M12 1.5V4H14.5" fill="#f0e8c8" stroke="#a89868" stroke-width=".8"/><path d="M11 4v5.4q0 2-2.4 2" fill="none" stroke="#2f60b0" stroke-width="1.7"/><path d="M4.4 10.2l3.6 6.6h-7.2z" fill="#f8d070" stroke="#d09a20" stroke-width=".9" stroke-linejoin="round"/><path d="M4.4 12.399999999999999v2.2M4.4 15.2v.8" stroke="#3a2a00" stroke-width="1"/></svg>
<div class="abs ui" id="ed-title" style="left:358px;top:77px;color:#161616;font-size:15px;letter-spacing:-.28px">Server.java</div>
<svg class="abs" style="left:438px;top:80px" width="12" height="12" viewBox="0 0 12 12"><path d="M1.5 1.5L3.8 1.5L6 4L8.2 1.5L10.5 1.5L10.5 3.8L8 6L10.5 8.2L10.5 10.5L8.2 10.5L6 8L3.8 10.5L1.5 10.5L1.5 8.2L4 6L1.5 3.8Z" fill="#fff" stroke="#1c1c1c" stroke-width="1.1"/></svg>
<div class="abs" style="left:1304px;top:81px;width:10px;height:4px;border:1.3px solid #111;background:#fff"></div>
<div class="abs" style="left:1334px;top:81px;width:10px;height:10px;border:1.3px solid #111;background:#fff;box-shadow:inset 0 1px 0 #fff,inset 0 2px 0 #444"></div>
<div class="abs" style="left:337px;top:105px;width:12px;height:426px;background:repeating-conic-gradient(#ef6c4a 0 25%,#fff 0 50%) 0 0/2px 2px"></div>
<div class="abs" style="left:337px;top:124px;width:9px;height:13px;background:#fff"></div>
<svg class="abs" style="left:337px;top:123px" width="13" height="16" viewBox="0 0 13 16"><path d="M3.8 2.2A3.3 3.3 0 0 0 2 8.2V9.6H5.6V8.2A3.3 3.3 0 0 0 3.8 2.2Z" fill="#fdf2b8" stroke="#e4a822" stroke-width="1"/><circle cx="3.4" cy="5" r="1.4" fill="#fff" opacity=".8"/><rect x="2.2" y="9.8" width="3.2" height="2.8" rx=".8" fill="#8e9cb0" stroke="#66748a" stroke-width=".6"/><path d="M8.8 6.800000000000001l3.6 6.6h-7.2z" fill="#f8d070" stroke="#d09a20" stroke-width=".9" stroke-linejoin="round"/><path d="M8.8 9.0v2.2M8.8 11.8v.8" stroke="#3a2a00" stroke-width="1"/></svg>
<div class="abs" style="left:374px;top:105px;width:1px;height:443px;background:#f0f0f0"></div>
<div class="abs" style="left:377px;top:310px;width:956px;height:17px;background:#e8f2fe"></div>
<div class="abs" style="left:458px;top:105px;width:24px;height:1px;background:repeating-linear-gradient(90deg,#f0a090 0 2px,transparent 2px 4px)"></div>
<div class="abs" style="left:569px;top:105px;width:18px;height:1px;background:repeating-linear-gradient(90deg,#f0a090 0 2px,transparent 2px 4px)"></div>
<div class="abs" style="left:593px;top:105px;width:18px;height:1px;background:repeating-linear-gradient(90deg,#f0a090 0 2px,transparent 2px 4px)"></div>
<div class="abs" style="left:617px;top:105px;width:24px;height:1px;background:repeating-linear-gradient(90deg,#f0a090 0 2px,transparent 2px 4px)"></div>
<div class="abs mono ln" style="left:349px;top:107px">21</div>
<div class="abs mono code" style="left:377px;top:107px">        <b class="k">try</b> {</div>
<div class="abs mono ln" style="left:349px;top:124px">22</div>
<div class="abs mono code" style="left:377px;top:124px">            ServerSocket <span class="v w">sSocket</span> = <b class="k">new</b> ServerSocket(8888);</div>
<div class="abs mono ln" style="left:349px;top:141px">23</div>
<div class="abs mono code" style="left:377px;top:141px">            System.<b class="o">out</b>.println(<span class="s">"Server ready at: "</span> + <b class="k">new</b> Date());</div>
<div class="abs mono ln" style="left:349px;top:158px">24</div>
<div class="abs mono ln" style="left:349px;top:175px">25</div>
<div class="abs mono code" style="left:377px;top:175px">            <span class="c">//<span class="q">tao</span> <span class="q">luong</span> <span class="q">cho</span> <span class="q">ket</span> <span class="q">noi</span> <span class="q">tu</span> client</span></div>
<div class="abs mono ln" style="left:349px;top:192px">26</div>
<div class="abs mono code" style="left:377px;top:192px">            Socket <span class="v">socket</span> = <span class="v">sSocket</span>.accept();</div>
<div class="abs mono ln" style="left:349px;top:209px">27</div>
<div class="abs mono ln" style="left:349px;top:226px">28</div>
<div class="abs mono code" style="left:377px;top:226px">            <span class="c">//<span class="q">tao</span> <span class="q">luong</span> <span class="q">du</span> lieu</span></div>
<div class="abs mono ln" style="left:349px;top:243px">29</div>
<div class="abs mono code" style="left:377px;top:243px">            PrintWriter <span class="v">output</span> = <b class="k">new</b> PrintWriter(</div>
<div class="abs mono ln" style="left:349px;top:260px">30</div>
<div class="abs mono code" style="left:377px;top:260px">            BufferedReader <span class="v">input</span> = <b class="k">new</b></div>
<div class="abs mono ln" style="left:349px;top:277px">31</div>
<div class="abs mono ln" style="left:349px;top:294px">32</div>
<div class="abs mono code" style="left:377px;top:294px">            <span class="c">//Thong <span class="q">bao</span> client da ket noi</span></div>
<div class="abs mono ln" style="left:349px;top:311px">33</div>
<div class="abs mono code" style="left:377px;top:311px">            <span class="v">output</span>.println(<span class="s">"You have connected</span></div>
<div class="abs mono ln" style="left:349px;top:328px">34</div>
<div class="abs mono ln" style="left:349px;top:345px">35</div>
<div class="abs mono code" style="left:377px;top:345px">            <span class="c">//<span class="q">Vong</span> lap <span class="q">lam</span> <span class="q">viec</span> voi</span></div>
<div class="abs mono ln" style="left:349px;top:362px">36</div>
<div class="abs mono code" style="left:377px;top:362px">            <b class="k">while</b>(<b class="k">true</b>) {</div>
<div class="abs mono ln" style="left:349px;top:379px">37</div>
<div class="abs mono code" style="left:377px;top:379px">                <span class="c">//<span class="q">Hien</span> <span class="q">thi</span> <span class="q">cac</span> chuoi</span></div>
<div class="abs mono ln" style="left:349px;top:396px">38</div>
<div class="abs mono code" style="left:377px;top:396px">            String <span class="v">chatInput</span> = <span class="v">input</span>.readLine();</div>
<div class="abs mono ln" style="left:349px;top:413px">39</div>
<div class="abs mono code" style="left:377px;top:413px">                System.<b class="o">out</b>.println(<span class="v">chatInput</span>);</div>
<div class="abs mono ln" style="left:349px;top:430px">40</div>
<div class="abs mono code" style="left:377px;top:430px">            <span class="v">output</span>.println(<span class="s">"abc"</span>);</div>
<div class="abs mono ln" style="left:349px;top:447px">41</div>
<div class="abs mono code" style="left:377px;top:447px">            }</div>
<div class="abs mono ln" style="left:349px;top:464px">42</div>
<div class="abs mono code" style="left:377px;top:464px">        } <b class="k">catch</b>(IOException <span class="v">exception</span>) {</div>
<div class="abs mono ln" style="left:349px;top:481px">43</div>
<div class="abs mono code" style="left:377px;top:481px">            System.<b class="o">out</b>.println(<span class="s">"Error"</span>);</div>
<div class="abs mono ln" style="left:349px;top:498px">44</div>
<div class="abs mono code" style="left:377px;top:498px">        }</div>
<div class="abs mono ln" style="left:349px;top:515px">45</div>
<div class="abs mono code" style="left:377px;top:515px">    }</div>
<div class="abs mono ln" style="left:349px;top:532px">46</div>
<div class="abs mono code" style="left:377px;top:532px">}</div>
<svg class="abs" style="left:577px;top:137px" width="56" height="4" viewBox="0 0 56 4"><polyline points="0,2.6 2,0.6 4,2.6 6,0.6 8,2.6 10,0.6 12,2.6 14,0.6 16,2.6 18,0.6 20,2.6 22,0.6 24,2.6 26,0.6 28,2.6 30,0.6 32,2.6 34,0.6 36,2.6 38,0.6 40,2.6 42,0.6 44,2.6 46,0.6 48,2.6 50,0.6 52,2.6 54,0.6 56,2.6" fill="none" stroke="#e2b82a" stroke-width="1.35"/></svg>
<svg class="abs" style="left:489px;top:188px" width="24" height="4" viewBox="0 0 24 4"><polyline points="0,2.6 2,0.6 4,2.6 6,0.6 8,2.6 10,0.6 12,2.6 14,0.6 16,2.6 18,0.6 20,2.6 22,0.6 24,2.6" fill="none" stroke="#f27a56" stroke-width="1.35"/></svg>
<svg class="abs" style="left:521px;top:188px" width="40" height="4" viewBox="0 0 40 4"><polyline points="0,2.6 2,0.6 4,2.6 6,0.6 8,2.6 10,0.6 12,2.6 14,0.6 16,2.6 18,0.6 20,2.6 22,0.6 24,2.6 26,0.6 28,2.6 30,0.6 32,2.6 34,0.6 36,2.6 38,0.6 40,2.6" fill="none" stroke="#f27a56" stroke-width="1.35"/></svg>
<svg class="abs" style="left:569px;top:188px" width="24" height="4" viewBox="0 0 24 4"><polyline points="0,2.6 2,0.6 4,2.6 6,0.6 8,2.6 10,0.6 12,2.6 14,0.6 16,2.6 18,0.6 20,2.6 22,0.6 24,2.6" fill="none" stroke="#f27a56" stroke-width="1.35"/></svg>
<svg class="abs" style="left:601px;top:188px" width="24" height="4" viewBox="0 0 24 4"><polyline points="0,2.6 2,0.6 4,2.6 6,0.6 8,2.6 10,0.6 12,2.6 14,0.6 16,2.6 18,0.6 20,2.6 22,0.6 24,2.6" fill="none" stroke="#f27a56" stroke-width="1.35"/></svg>
<svg class="abs" style="left:633px;top:188px" width="24" height="4" viewBox="0 0 24 4"><polyline points="0,2.6 2,0.6 4,2.6 6,0.6 8,2.6 10,0.6 12,2.6 14,0.6 16,2.6 18,0.6 20,2.6 22,0.6 24,2.6" fill="none" stroke="#f27a56" stroke-width="1.35"/></svg>
<svg class="abs" style="left:665px;top:188px" width="16" height="4" viewBox="0 0 16 4"><polyline points="0,2.6 2,0.6 4,2.6 6,0.6 8,2.6 10,0.6 12,2.6 14,0.6 16,2.6" fill="none" stroke="#f27a56" stroke-width="1.35"/></svg>
<svg class="abs" style="left:489px;top:239px" width="24" height="4" viewBox="0 0 24 4"><polyline points="0,2.6 2,0.6 4,2.6 6,0.6 8,2.6 10,0.6 12,2.6 14,0.6 16,2.6 18,0.6 20,2.6 22,0.6 24,2.6" fill="none" stroke="#f27a56" stroke-width="1.35"/></svg>
<svg class="abs" style="left:521px;top:239px" width="40" height="4" viewBox="0 0 40 4"><polyline points="0,2.6 2,0.6 4,2.6 6,0.6 8,2.6 10,0.6 12,2.6 14,0.6 16,2.6 18,0.6 20,2.6 22,0.6 24,2.6 26,0.6 28,2.6 30,0.6 32,2.6 34,0.6 36,2.6 38,0.6 40,2.6" fill="none" stroke="#f27a56" stroke-width="1.35"/></svg>
<svg class="abs" style="left:569px;top:239px" width="16" height="4" viewBox="0 0 16 4"><polyline points="0,2.6 2,0.6 4,2.6 6,0.6 8,2.6 10,0.6 12,2.6 14,0.6 16,2.6" fill="none" stroke="#f27a56" stroke-width="1.35"/></svg>
<svg class="abs" style="left:537px;top:307px" width="24" height="4" viewBox="0 0 24 4"><polyline points="0,2.6 2,0.6 4,2.6 6,0.6 8,2.6 10,0.6 12,2.6 14,0.6 16,2.6 18,0.6 20,2.6 22,0.6 24,2.6" fill="none" stroke="#f27a56" stroke-width="1.35"/></svg>
<svg class="abs" style="left:489px;top:358px" width="32" height="4" viewBox="0 0 32 4"><polyline points="0,2.6 2,0.6 4,2.6 6,0.6 8,2.6 10,0.6 12,2.6 14,0.6 16,2.6 18,0.6 20,2.6 22,0.6 24,2.6 26,0.6 28,2.6 30,0.6 32,2.6" fill="none" stroke="#f27a56" stroke-width="1.35"/></svg>
<svg class="abs" style="left:561px;top:358px" width="24" height="4" viewBox="0 0 24 4"><polyline points="0,2.6 2,0.6 4,2.6 6,0.6 8,2.6 10,0.6 12,2.6 14,0.6 16,2.6 18,0.6 20,2.6 22,0.6 24,2.6" fill="none" stroke="#f27a56" stroke-width="1.35"/></svg>
<svg class="abs" style="left:593px;top:358px" width="32" height="4" viewBox="0 0 32 4"><polyline points="0,2.6 2,0.6 4,2.6 6,0.6 8,2.6 10,0.6 12,2.6 14,0.6 16,2.6 18,0.6 20,2.6 22,0.6 24,2.6 26,0.6 28,2.6 30,0.6 32,2.6" fill="none" stroke="#f27a56" stroke-width="1.35"/></svg>
<svg class="abs" style="left:521px;top:392px" width="32" height="4" viewBox="0 0 32 4"><polyline points="0,2.6 2,0.6 4,2.6 6,0.6 8,2.6 10,0.6 12,2.6 14,0.6 16,2.6 18,0.6 20,2.6 22,0.6 24,2.6 26,0.6 28,2.6 30,0.6 32,2.6" fill="none" stroke="#f27a56" stroke-width="1.35"/></svg>
<svg class="abs" style="left:561px;top:392px" width="24" height="4" viewBox="0 0 24 4"><polyline points="0,2.6 2,0.6 4,2.6 6,0.6 8,2.6 10,0.6 12,2.6 14,0.6 16,2.6 18,0.6 20,2.6 22,0.6 24,2.6" fill="none" stroke="#f27a56" stroke-width="1.35"/></svg>
<svg class="abs" style="left:593px;top:392px" width="24" height="4" viewBox="0 0 24 4"><polyline points="0,2.6 2,0.6 4,2.6 6,0.6 8,2.6 10,0.6 12,2.6 14,0.6 16,2.6 18,0.6 20,2.6 22,0.6 24,2.6" fill="none" stroke="#f27a56" stroke-width="1.35"/></svg>
<div class="abs" style="left:1333px;top:105px;width:14px;height:444px;border:1px solid #b9b5ad;border-radius:7px;background:linear-gradient(90deg,#d0d0d0,#e8e8e8)"></div>
<div class="abs" style="left:1347.5px;top:104px;width:13px;height:460px;background:#f7f7f7"></div>
<div class="abs" style="left:1349px;top:314px;width:9px;height:5px;border:1px solid #c9a530;background:#f4e8b8"></div>
<div class="abs" style="left:1350px;top:553px;width:7px;height:7px;background:#d4a21e;border:1px solid #b88a14"></div>
<div class="abs" style="left:375px;top:548px;width:957px;height:14px;border:1px solid #c4c0b8;border-radius:7px;background:linear-gradient(#f6f6f6,#e8e8e8)"></div>

<!-- BOTTOM PANEL -->
<div class="abs" style="left:335px;top:569px;width:1028px;height:166px;border-radius:7px 7px 6px 6px;background:#fff;box-shadow:0 0 0 1px #e6e6e6"></div>
<!-- console active tab (mostly hidden) -->
<div class="abs" style="left:621px;top:570px;width:110px;height:34px;border-radius:6px 6px 0 0;background:linear-gradient(#cfd4e0,#e8ebf2 70%,#fff)"></div>
<div class="abs" style="left:626px;top:584px;width:6px;height:9px;background:#34509c;border-radius:1px"></div>
<!-- problems icon -->
<svg class="abs" style="left:338px;top:578px" width="16" height="16" viewBox="0 0 16 16"><rect x="1.5" y="1.5" width="9" height="9" fill="#e8e8ec" stroke="#c4c4cc" stroke-width="1"/><circle cx="6.4" cy="5.4" r="2.6" fill="#f08a8a"/><path d="M11.6 2V12.6L14.4 15" stroke="#b8c4d8" stroke-width="1.3" fill="none"/><path d="M4.4 9.2l3.2 5.6h-6.4z" fill="#fbe0a0" stroke="#e0b050" stroke-width=".8" stroke-linejoin="round"/></svg>
<div class="abs ui" id="b1" style="left:359.5px;top:578px;color:#9c9c9c;font-size:15px">Problems</div>
<div class="abs ui" id="b0" style="left:435.3px;top:577.5px;color:#6ea2dc;font-size:10.6px;font-weight:bold;line-height:20px">@</div>
<div class="abs ui" id="b2" style="left:453.7px;top:578px;color:#9c9c9c;font-size:15px;letter-spacing:-.29px">Javadoc</div>
<svg class="abs" style="left:518px;top:578px" width="15" height="16" viewBox="0 0 15 16"><path d="M1.5 1.5H8L10.5 4V13.5H1.5Z" fill="#fdf8e8" stroke="#d8c48c" stroke-width="1"/><path d="M3.4 5.4H7M3.4 7.6H6M3.4 9.8H7" stroke="#9ab4d8" stroke-width=".9"/><path d="M8 9.4H11V7.4L14.2 10.6L11 13.8V11.8H8Z" fill="#fbe6a8" stroke="#d8a840" stroke-width=".9" stroke-linejoin="round"/></svg>
<div class="abs ui" id="b3" style="left:537.7px;top:578px;color:#9c9c9c;font-size:15px;letter-spacing:.11px">Declaration</div>
<div class="abs ui" id="b4" style="left:337.5px;top:604px;color:#3c3c3c;font-size:15px;letter-spacing:.1px"><span id="b4a">Server [Java Application] </span>/home/minhvu/jdk1.8.0_72/bin/java</div>
<div class="abs" style="left:337px;top:622px;width:1008px;height:1px;background:#cfcfcf"></div>
<div class="abs mono code" style="left:339px;top:625px">Server ready at: Thu Nov 05 10:22:23 ICT 2015</div>
<div class="abs mono code" style="left:339px;top:642px">adf</div>
<div class="abs mono code" style="left:339px;top:659px">what the hell is that?</div>
<div class="abs" style="left:337px;top:718px;width:1009px;height:14px;border:1px solid #c0bcb4;border-radius:7px;background:linear-gradient(#f4f4f4,#e6e6e6)"></div>
<div class="abs" style="left:1346px;top:626px;width:14px;height:92px;border:1px solid #c0bcb4;border-radius:7px;background:linear-gradient(90deg,#f4f4f4,#e6e6e6)"></div>


<!-- STATUS BAR -->
<div class="abs" style="left:47px;top:736px;width:1319px;height:32px;background:linear-gradient(#dadada,#e0e0e0 40%)"></div>
<div class="abs" style="left:705px;top:739px;width:1px;height:26px;background:#d2d2d2;box-shadow:1px 0 0 #f4f4f4"></div>
<div class="abs" style="left:824px;top:739px;width:1px;height:26px;background:#d2d2d2;box-shadow:1px 0 0 #f4f4f4"></div>
<div class="abs" style="left:936px;top:739px;width:1px;height:26px;background:#d2d2d2;box-shadow:1px 0 0 #f4f4f4"></div>
<div class="abs ui" id="st1" style="left:712px;top:741px;color:#4a4a4a;letter-spacing:.46px">Writable</div>
<div class="abs ui" id="st2" style="left:831.4px;top:741px;color:#4a4a4a;letter-spacing:.05px">Smart Insert</div>
<div class="abs ui" id="st3" style="left:943.2px;top:741px;color:#4a4a4a;word-spacing:-2.2px">33 : 28</div>
<div class="abs" style="left:1045px;top:742.2px;width:2px;height:22px;border-radius:1px;background:repeating-linear-gradient(#958d7c 0 3.7px,transparent 3.7px 6px)"></div>


<!-- TERMINAL -->
<div class="abs" style="left:628px;top:236px;width:722px;height:462px;border-radius:6px 6px 0 0;background:#000;box-shadow:0 5px 17px 2px rgba(0,0,0,.72),0 0 3px rgba(0,0,0,.5)"></div>
<div class="abs" style="left:628px;top:236px;width:722px;height:28px;border-radius:6px 6px 0 0;background:linear-gradient(#5f5d54,#4b4a43 45%,#3d3c38);box-shadow:inset 0 1px 0 #75736a"></div>
<div class="abs" style="left:635.5px;top:242px;width:16px;height:16px;border-radius:50%;background:linear-gradient(#f58256,#dd4a22);border:1px solid #7a2a12;box-shadow:0 1px 0 rgba(255,255,255,.12)"></div>
<div class="abs" style="left:654.5px;top:242px;width:16px;height:16px;border-radius:50%;background:linear-gradient(#8f8d85,#6b6961);border:1px solid #33322e;box-shadow:0 1px 0 rgba(255,255,255,.12)"></div>
<div class="abs" style="left:673.5px;top:242px;width:16px;height:16px;border-radius:50%;background:linear-gradient(#8f8d85,#6b6961);border:1px solid #33322e;box-shadow:0 1px 0 rgba(255,255,255,.12)"></div>
<svg class="abs" style="left:635px;top:242px" width="56" height="16" viewBox="0 0 56 16"><path d="M6 5.5L11 10.5M11 5.5L6 10.5" stroke="#5a1e0c" stroke-width="1.4"/><path d="M24.2 8.2H30.8" stroke="#3a3934" stroke-width="1.5"/><rect x="43.4" y="5.4" width="6.2" height="5.4" fill="none" stroke="#3a3934" stroke-width="1.2"/></svg>
<div class="abs" id="tt" style="left:701.5px;top:241px;font-size:15px;font-weight:bold;color:#dfdbd2;line-height:20px;white-space:nowrap;letter-spacing:-.375px;text-shadow:0 -1px 0 rgba(0,0,0,.5)">minhvu@minhvu: ~</div>
<div class="abs mono term" style="left:629px;top:267px">minhvu@minhvu:~$ telnet 127.0.0.1 8888</div>
<div class="abs mono term" style="left:629px;top:285px">Trying 127.0.0.1...</div>
<div class="abs mono term" style="left:629px;top:303px">Connected to 127.0.0.1.</div>
<div class="abs mono term" style="left:629px;top:321px">Escape character is '^]'.</div>
<div class="abs mono term" style="left:629px;top:339px">You have connected at: Thu Nov 05 10:22:38 ICT 2015</div>
<div class="abs mono term" style="left:629px;top:357px">adf</div>
<div class="abs mono term" style="left:629px;top:375px">abc</div>
<div class="abs mono term" style="left:629px;top:393px">what the hell is that?</div>
<div class="abs mono term" style="left:629px;top:411px">abc</div>
<div class="abs" style="left:629px;top:428px;width:9px;height:17px;background:#7ed321"></div>

<!-- TOP PANEL -->
<div id="panel" class="abs">
<div class="abs" style="left:0;top:23px;width:1366px;height:1px;background:#33322e"></div>
<div class="abs wbtn" style="left:5px"></div>
<div class="abs wbtn" style="left:24px"></div>
<div class="abs wbtn" style="left:43px"></div>
<svg class="abs" style="left:5px;top:3px" width="56" height="17" viewBox="0 0 56 17"><path d="M6 6L11 11M11 6L6 11" stroke="#38372f" stroke-width="1.3"/><path d="M24 8.5H31" stroke="#38372f" stroke-width="1.4"/><rect x="43.2" y="6.2" width="6.6" height="4.6" fill="none" stroke="#38372f" stroke-width="1.2"/></svg>
<div class="abs title" id="ptitle" style="text-shadow:0 -1px 0 rgba(0,0,0,.35)">Java - testServer/src/testServer/Server.java - Eclipse</div>
<!-- indicators -->
<svg class="abs" style="left:972px;top:2px" width="20" height="20" viewBox="0 0 20 20"><circle cx="10" cy="9.8" r="8.8" fill="#dfdbd2"/><circle cx="10" cy="9.8" r="4.1" fill="none" stroke="#4a4943" stroke-width="1.7"/><circle cx="3.9" cy="9.8" r="1.5" fill="#4a4943"/><circle cx="13.1" cy="4.5" r="1.5" fill="#4a4943"/><circle cx="13.1" cy="15.1" r="1.5" fill="#4a4943"/><path d="M6.2 9.8H4M12 6.5L12.8 5M12 13.1L12.8 14.6" stroke="#dfdbd2" stroke-width="1"/></svg>
<svg class="abs" style="left:1003px;top:4px" width="22" height="17" viewBox="0 0 22 17"><path d="M1.2 6.6Q11 -2.2 20.8 6.6" fill="none" stroke="#8d8a82" stroke-width="1.8"/><path d="M4.2 9.4Q11 3.2 17.8 9.4" fill="none" stroke="#dfdbd2" stroke-width="1.9"/><path d="M7.2 12.2Q11 8.8 14.8 12.2" fill="none" stroke="#dfdbd2" stroke-width="1.9"/><circle cx="11" cy="14.4" r="1.5" fill="#dfdbd2"/></svg>
<div class="abs" style="left:1036px;top:2px;width:20px;height:20px;border-radius:2.5px;background:#dfdbd2"></div>
<div class="abs" id="en" style="left:1040.2px;top:4px;font-size:13px;color:#3c3b37;line-height:18px;letter-spacing:-.5px">En</div>
<svg class="abs" style="left:1066px;top:3px" width="12" height="18" viewBox="0 0 12 18"><path d="M2 5.4L9.6 12.4L6 16V2L9.6 5.6L2 12.6" fill="none" stroke="#dfdbd2" stroke-width="1.3" stroke-linejoin="round"/></svg>
<svg class="abs" style="left:1089px;top:5px" width="20" height="14" viewBox="0 0 20 14"><rect x=".8" y=".8" width="18.4" height="12" rx="1" fill="#dfdbd2"/><path d="M2.2 2L10 8.4L17.8 2M2.2 11.8L7.6 6.6M17.8 11.8L12.4 6.6" fill="none" stroke="#45443e" stroke-width="1.2"/></svg>
<svg class="abs" style="left:1121px;top:5px" width="26" height="14" viewBox="0 0 26 14"><rect x="1.6" y="1.4" width="20.4" height="11" rx="1.6" fill="none" stroke="#dfdbd2" stroke-width="1.3"/><rect x="22.6" y="4.6" width="2" height="4.6" rx=".8" fill="#dfdbd2"/><rect x="3.4" y="3.2" width="16.8" height="7.4" fill="#77746d"/><path d="M5.6 3.4L14 5.8L11.8 7L18 10.4L9.6 8L11.8 6.8Z" fill="#efebe2"/></svg>
<svg class="abs" style="left:1157px;top:3px" width="21" height="19" viewBox="0 0 21 19"><path d="M1 6.4H4.6L9.2 2V16.6L4.6 12.4H1Z" fill="#dfdbd2"/><path d="M11.4 6.2Q13.4 9.4 11.4 12.6" fill="none" stroke="#dfdbd2" stroke-width="1.5"/><path d="M14 4Q17.6 9.4 14 14.8" fill="none" stroke="#c8c4bc" stroke-width="1.4"/><path d="M16.8 1.6Q22 9.4 16.8 17.2" fill="none" stroke="#7d7a73" stroke-width="1.3"/></svg>
<div class="abs" id="clock" style="left:1190.5px;top:2px;font-size:14.5px;color:#dfdbd2;line-height:20px;white-space:pre;letter-spacing:-.33px">T5 Th11  5 2015 10:22</div>
<svg class="abs" style="left:1341px;top:2px" width="18" height="19" viewBox="0 0 18 19"><g transform="translate(9 10) scale(.9)"><g fill="#dfdbd2"><rect x="-1.4" y="-8.6" width="2.8" height="3" transform="rotate(45)"/><rect x="-1.4" y="-8.6" width="2.8" height="3" transform="rotate(90)"/><rect x="-1.4" y="-8.6" width="2.8" height="3" transform="rotate(135)"/><rect x="-1.4" y="-8.6" width="2.8" height="3" transform="rotate(180)"/><rect x="-1.4" y="-8.6" width="2.8" height="3" transform="rotate(225)"/><rect x="-1.4" y="-8.6" width="2.8" height="3" transform="rotate(270)"/><rect x="-1.4" y="-8.6" width="2.8" height="3" transform="rotate(315)"/></g><path d="M-3.2 -4.6A5.6 5.6 0 1 0 3.2 -4.6" fill="none" stroke="#dfdbd2" stroke-width="2.4"/><path d="M0 -8V-2.6" stroke="#dfdbd2" stroke-width="2.1" stroke-linecap="round"/></g></svg>

</div>

<!-- LAUNCHER -->
<div id="launcher" class="abs">
<svg width="0" height="0" style="position:absolute"><defs>
<radialGradient id="tg" cx="50%" cy="0%" r="90%"><stop offset="0" stop-color="#56638f"/><stop offset=".45" stop-color="#27335f"/><stop offset="1" stop-color="#162150"/></radialGradient>
<linearGradient id="gl" x1="0" y1="0" x2="0" y2="1"><stop offset="0" stop-color="#fff" stop-opacity=".28"/><stop offset=".5" stop-color="#fff" stop-opacity=".04"/><stop offset="1" stop-color="#fff" stop-opacity="0"/></linearGradient>
<linearGradient id="hdd" x1="0" y1="0" x2="0" y2="1"><stop offset="0" stop-color="#f2f2f2"/><stop offset="1" stop-color="#b4b4b4"/></linearGradient>
<linearGradient id="tact" x1="0" y1="0" x2="0" y2="1"><stop offset="0" stop-color="#d6d6d6"/><stop offset="1" stop-color="#a4a4a4"/></linearGradient>
<radialGradient id="ffo" cx="35%" cy="25%" r="85%"><stop offset="0" stop-color="#fb9a24"/><stop offset=".6" stop-color="#f0641c"/><stop offset="1" stop-color="#d84216"/></radialGradient><radialGradient id="ffg" cx="55%" cy="20%" r="85%"><stop offset="0" stop-color="#48b0ec"/><stop offset=".45" stop-color="#1f5cb8"/><stop offset="1" stop-color="#0c1c5a"/></radialGradient>
<linearGradient id="cab" x1="0" y1="0" x2="0" y2="1"><stop offset="0" stop-color="#cdcdcd"/><stop offset="1" stop-color="#9a9a9a"/></linearGradient><linearGradient id="bfb" x1="0" y1="0" x2="1" y2="1"><stop offset="0" stop-color="#4a68c0"/><stop offset=".5" stop-color="#233f9e"/><stop offset="1" stop-color="#183088"/></linearGradient>
</defs></svg>
<svg class="abs" style="left:5.6px;top:4.9px" width="35" height="35" viewBox="0 0 35 35"><rect x=".5" y=".5" width="34" height="34" rx="3.5" fill="url(#bfb)" stroke="#3a55aa" stroke-width="1"/><path d="M3 24Q6 6 26 4Q13 9 10 24Q18 33 31 21Q25 35 9 31Z" fill="#fff" opacity=".10"/><circle cx="17.5" cy="17.6" r="11.4" fill="#fff" opacity=".13"/><circle cx="17.5" cy="17.6" r="8.3" fill="#fff"/><circle cx="17.5" cy="17.6" r="4.3" fill="none" stroke="#16256e" stroke-width="1.5"/><circle cx="11.2" cy="17.6" r="1.35" fill="#16256e"/><circle cx="20.65" cy="12.15" r="1.35" fill="#16256e"/><circle cx="20.65" cy="23.05" r="1.35" fill="#16256e"/><path d="M13.2 17.6H12M19.65 13.9L20.3 12.8M19.65 21.3L20.3 22.4" stroke="#fff" stroke-width=".9"/><rect x="1" y="1" width="33" height="16" rx="3" fill="url(#gl)"/></svg>
<svg class="abs" style="left:5.6px;top:45.9px" width="35" height="35" viewBox="0 0 35 35"><rect x=".5" y=".5" width="34" height="34" rx="3.5" fill="url(#tg)" stroke="#27326a" stroke-width="1"/><rect x="4.8" y="4.4" width="25.8" height="26.8" rx="1.6" fill="url(#hdd)" stroke="#8a8a8a" stroke-width=".7"/><rect x="6.8" y="7.6" width="21.8" height="8" fill="#3c3c3c"/><rect x="7.6" y="9.4" width="20.2" height="6.4" fill="#ee9658"/><rect x="7.6" y="9.4" width="20.2" height="1.4" fill="#f8c496"/><rect x="7.6" y="12.2" width="20.2" height=".9" fill="#d4743a"/><rect x="4.8" y="15.4" width="25.8" height="15.8" rx="1.2" fill="url(#cab)" stroke="#8a8a8a" stroke-width=".7"/><path d="M5.2 15.9H30.2" stroke="#ececec" stroke-width=".9"/><rect x="13" y="21" width="9.4" height="4.8" rx="1.2" fill="#8e8e8e" stroke="#6e6e6e" stroke-width=".7"/><rect x="14.6" y="22.5" width="6.2" height="1.8" rx=".7" fill="#ececec"/><rect x="1" y="1" width="33" height="16" rx="3" fill="url(#gl)"/></svg>
<svg class="abs" style="left:5.6px;top:87.0px" width="35" height="35" viewBox="0 0 35 35"><rect x=".5" y=".5" width="34" height="34" rx="3.5" fill="url(#tg)" stroke="#27326a" stroke-width="1"/><circle cx="17.5" cy="18" r="13.3" fill="#e34b3c"/><path d="M17.5 18L5.98 11.35A13.3 13.3 0 0 0 10.85 29.52L17.5 18Z" fill="#2ba24c"/><path d="M17.5 18L5.98 11.35A13.3 13.3 0 0 0 15.4 31.13L21.5 20.5Z" fill="#2ba24c"/><path d="M17.5 18L29.02 11.35H17.5Z" fill="#e34b3c"/><path d="M15.4 31.13A13.3 13.3 0 0 0 29.02 11.35H17.5L22.9 20.6Z" fill="#fbd04a"/><circle cx="17.5" cy="18" r="6.4" fill="#fff"/><circle cx="17.5" cy="18" r="5" fill="#4a8af4"/><rect x="1" y="1" width="33" height="16" rx="3" fill="url(#gl)"/></svg>
<svg class="abs" style="left:5.6px;top:128.0px" width="35" height="35" viewBox="0 0 35 35"><rect x=".5" y=".5" width="34" height="34" rx="3.5" fill="#b4724c" stroke="#c08a68" stroke-width="1"/><circle cx="17.1" cy="17.1" r="13.7" fill="url(#ffo)"/><circle cx="18.8" cy="13.9" r="10.5" fill="url(#ffg)"/><path d="M3.4 15Q3.8 9.6 6 7.4L7.8 9.6Q10.8 7.2 13.6 9.4Q14.8 10.8 16 11.4Q18.6 12.2 19.4 14.2Q21.2 15.8 20.6 17Q18 16.8 16.4 18.4Q14.6 20.8 11.4 21.6Q13.6 24.2 17.4 24.2Q22 24 24.6 20.8Q26 26 20 29.6L8 28L3.4 20Z" fill="url(#ffo)"/><path d="M12.4 12.6Q14.6 12.2 15.8 13.6Q14.2 14.4 13 14Z" fill="#fff" opacity=".85"/><path d="M5.2 8.6L8.4 5.8L9.8 9.6Z" fill="#f4801e"/><path d="M26 6.6Q32.8 12 30.8 21Q29 26 24.4 28.6Q29 22.4 27.8 15.4Q27.4 10 26 6.6Z" fill="#fcc82c"/><path d="M28.6 10.4Q32 15.6 30.2 21.6Q29.4 18 28.4 16Q29.2 13 28.6 10.4Z" fill="#f58a1e"/><path d="M5.4 22Q8 28.4 15 30.4Q22 31.6 27 27Q21 30 14.4 27.4Q8.6 25 5.4 22Z" fill="#d63c16" opacity=".85"/><rect x="1" y="1" width="33" height="16" rx="3" fill="url(#gl)"/></svg>
<svg class="abs" style="left:0;top:142.0px" width="4" height="7" viewBox="0 0 4 7"><path d="M0 0L3.8 3.5L0 7Z" fill="#d8d8d8"/></svg>
<svg class="abs" style="left:5.6px;top:169.1px" width="35" height="35" viewBox="0 0 35 35"><rect x=".5" y=".5" width="34" height="34" rx="3.5" fill="url(#tg)" stroke="#27326a" stroke-width="1"/><path d="M3.2 3.8L24.2 6.8V25L3.2 30Z" fill="#4a9e2a"/><path d="M3.2 3.8L24.2 6.8V8.8L3.2 6.2Z" fill="#7cc850"/><path d="M3.2 30L24.2 25V23L3.2 27.6Z" fill="#2e7418"/><text x="7.2" y="22.8" font-family="Liberation Sans" font-weight="bold" font-size="18.5" fill="#fff" textLength="15.4" lengthAdjust="spacingAndGlyphs">Qt</text><path d="M19.4 31.6Q19.6 26.4 24 23Q28 20 31.6 18Q31.4 22.6 28.6 26.6Q25 31 19.4 31.6Z" fill="#dcdcd8" stroke="#b4b4ac" stroke-width=".5"/><path d="M19.8 31.2L30.8 19.2" stroke="#a4a49c" stroke-width=".7"/><rect x="1" y="1" width="33" height="16" rx="3" fill="url(#gl)"/></svg>
<svg class="abs" style="left:5.6px;top:210.1px" width="35" height="35" viewBox="0 0 35 35"><rect x=".5" y=".5" width="34" height="34" rx="3.5" fill="#a8584a" stroke="#c47c6c" stroke-width="1"/><circle cx="16" cy="17.6" r="13.2" fill="#f49a2a"/><circle cx="19.6" cy="17.6" r="12.6" fill="#2c2255"/><path d="M8.4 22.6A12.6 12.6 0 0 0 30.8 22.6Z" fill="#3a2d78" opacity=".8"/><rect x="7.2" y="13" width="25" height="1.9" fill="#fff"/><rect x="7" y="16.4" width="25.4" height="1.9" fill="#fff"/><rect x="7.2" y="19.7" width="25" height="1.9" fill="#fff"/><circle cx="19.6" cy="17.6" r="12.6" fill="none" stroke="#2c2255" stroke-width=".6"/><rect x="1" y="1" width="33" height="16" rx="3" fill="url(#gl)"/></svg>
<svg class="abs" style="left:0;top:224.1px" width="4" height="7" viewBox="0 0 4 7"><path d="M0 0L3.8 3.5L0 7Z" fill="#d8d8d8"/></svg>
<svg class="abs" style="left:5.6px;top:251.1px" width="35" height="35" viewBox="0 0 35 35"><rect x=".5" y=".5" width="34" height="34" rx="3.5" fill="url(#tg)" stroke="#27326a" stroke-width="1"/><path d="M17.4 4.6L29.2 10L17.8 15.8L5.4 10Z" fill="#d6e8e6" stroke="#d6e8e6" stroke-width="1.2" stroke-linejoin="round"/><path d="M5.4 10L17.8 15.8V30.4L6 25Z" fill="#86b0f2" stroke="#86b0f2" stroke-width="1.2" stroke-linejoin="round"/><path d="M11 14L17.8 16.4V30.4L11 27.4Z" fill="#c4d8f8" opacity=".55"/><path d="M17.8 15.8L29.2 10L28.6 25L17.8 30.4Z" fill="#eef1f4" stroke="#eef1f4" stroke-width="1.2" stroke-linejoin="round"/><path d="M24 13L29.2 10L28.6 25L24 27.4Z" fill="#c4ccd6" opacity=".6"/><path d="M5.4 10L17.8 15.8L29.2 10M17.8 15.8V30.4" fill="none" stroke="#fff" stroke-width="1" opacity=".85"/><rect x="1" y="1" width="33" height="16" rx="3" fill="url(#gl)"/></svg>
<svg class="abs" style="left:5.6px;top:292.2px" width="35" height="35" viewBox="0 0 35 35"><rect x=".5" y=".5" width="34" height="34" rx="3.5" fill="url(#tg)" stroke="#27326a" stroke-width="1"/><rect x="3.6" y="4.2" width="27.6" height="27" fill="#fdfefe" stroke="#2c8ccc" stroke-width="1.2"/><rect x="4.2" y="4.8" width="26.4" height="12" fill="#e4f0fa" opacity=".7"/><path d="M7.4 7.2Q10.6 6.2 13.4 9Q17 9.6 20 13Q23 16.6 24.6 20.4L27.2 23.6Q24.8 22.6 23.4 23.4Q22.4 20.4 19.6 18.6Q18 21 15.4 21.4L16.4 18.4Q13 17.6 11.6 14Q10.6 11 8.6 9.2Z" fill="none" stroke="#3c7cb4" stroke-width=".9" stroke-linejoin="round"/><path d="M13.6 15.6L15.6 21" stroke="#3c7cb4" stroke-width=".7"/><rect x="4.2" y="25.4" width="26.4" height="5.4" fill="#1e86c8"/><text x="5" y="30" font-family="Liberation Sans" font-weight="bold" font-size="5.4" fill="#fff" textLength="24.6" lengthAdjust="spacingAndGlyphs">Workbench</text><rect x="5.2" y="23.2" width="3.6" height="1.4" fill="#3c7cb4"/><rect x="9.2" y="23.2" width="3.4" height="1.4" fill="#f4a020"/><rect x="1" y="1" width="33" height="16" rx="3" fill="url(#gl)"/></svg>
<svg class="abs" style="left:5.6px;top:333.2px" width="35" height="35" viewBox="0 0 35 35"><rect x=".5" y=".5" width="34" height="34" rx="3.5" fill="url(#tg)" stroke="#27326a" stroke-width="1"/><path d="M5.8 10.6L7 9L8.8 8.9L13.4 13.6L15.8 11.2L18.8 10.3L22.2 9.3L24.5 10.1L28.2 19.5L20.9 26.4L10.6 22.9L8.5 21.2L9 20L12.6 20L5.8 12Z" fill="#fff" stroke="#4c4c4c" stroke-width="1.9" stroke-linejoin="round"/><path d="M14.6 12.8L15.4 15M17.4 11.8L18.3 13.9M20.3 11L21.3 13.1" stroke="#8a8a8a" stroke-width="1"/><rect x="1" y="1" width="33" height="16" rx="3" fill="url(#gl)"/></svg>
<svg class="abs" style="left:5.6px;top:374.3px" width="35" height="35" viewBox="0 0 35 35"><rect x=".5" y=".5" width="34" height="34" rx="3.5" fill="url(#tg)" stroke="#27326a" stroke-width="1"/><path d="M5 7.6Q5 6.4 6.2 6.4H28.8Q30 6.4 30 7.6L31.2 27.4Q31.2 28.8 29.8 28.8H5.2Q3.8 28.8 3.8 27.4Z" fill="#fff"/><path d="M7.4 5.4Q7.4 4 8.8 4H26.2Q27.6 4 27.6 5.4L29 23Q29 24.6 27.4 24.6H7.6Q6 24.6 6 23Z" fill="#4a4a4a"/><path d="M6 21.4L29 21.4L29 23Q29 24.6 27.4 24.6H7.6Q6 24.6 6 23Z" fill="#2e2e2e"/><path d="M7.4 5.4Q7.4 4 8.8 4H26.2Q27.6 4 27.6 5.4L28 11H7Z" fill="#666" opacity=".6"/><path d="M22 8.8Q17.6 6.8 14.6 8.6Q12.6 10.2 14.4 12Q16 13 19.4 13.6Q22.6 14.6 21.6 17Q20 19.6 13.4 17.6" fill="none" stroke="#f89a2a" stroke-width="2.3" stroke-linecap="round"/><rect x="1" y="1" width="33" height="16" rx="3" fill="url(#gl)"/></svg>
<svg class="abs" style="left:5.6px;top:415.3px" width="35" height="35" viewBox="0 0 35 35"><rect x=".5" y=".5" width="34" height="34" rx="3.5" fill="url(#tg)" stroke="#27326a" stroke-width="1"/><g transform="translate(0 -3.8)"><path d="M3.4 6.8L17.4 6.2V19.8L3.4 20.2Z" fill="#d22a1e"/><path d="M3.4 6.8L17.4 6.2V10.4Q10 11.8 3.4 10.6Z" fill="#f4b8b0" opacity=".8"/><path d="M18.6 7.2L29.6 7.6V19L18.6 19.4Z" fill="#4cc62c"/><path d="M18.6 7.2L29.6 7.6V10L18.6 9.8Z" fill="#8ce470" opacity=".8"/><path d="M4 21L17.4 20.4V33.4L5 36Z" fill="#d6ce1a"/><path d="M4 21L17.4 20.4L16.4 23.2L4.8 23.8Z" fill="#a49c10"/><path d="M18.2 20.2L30.4 19.8V32.4L18.8 34.4Z" fill="#4a10c6"/><path d="M18.2 20.2L30.4 19.8L29.8 22.4L19.2 23Z" fill="#2a088c"/></g><rect x="1" y="1" width="33" height="16" rx="3" fill="url(#gl)"/></svg>
<svg class="abs" style="left:5.6px;top:456.3px" width="35" height="35" viewBox="0 0 35 35"><rect x=".5" y=".5" width="34" height="34" rx="3.5" fill="url(#tg)" stroke="#27326a" stroke-width="1"/><path d="M12.6 8.6V6.2Q12.6 3.8 15.2 3.8H19.8Q22.4 3.8 22.4 6.2V8.6" fill="none" stroke="#e8825a" stroke-width="2"/><path d="M4.2 7.8L30.8 7.8L31 29.4Q31 30.4 30 30.4H5Q4 30.4 4 29.4Z" fill="#ee7a3a"/><path d="M4.2 7.8H30.8L30.9 12H4.1Z" fill="#f49a66" opacity=".8"/><path d="M4 26.4H31L31 29.4Q31 30.4 30 30.4H5Q4 30.4 4 29.4Z" fill="#d85e22" opacity=".7"/><path d="M13.2 26.2L17.5 15.6L21.8 26.2M15 22H20" fill="none" stroke="#fff" stroke-width="2.1" stroke-linejoin="round"/><path d="M11.6 23.8H23.4" stroke="#fff" stroke-width="1.1"/><path d="M11.8 26.2H14.8M20.2 26.2H23.2" stroke="#fff" stroke-width="1.5"/><rect x="1" y="1" width="33" height="16" rx="3" fill="url(#gl)"/></svg>
<svg class="abs" style="left:5.6px;top:497.4px" width="35" height="35" viewBox="0 0 35 35"><rect x=".5" y=".5" width="34" height="34" rx="3.5" fill="url(#tg)" stroke="#27326a" stroke-width="1"/><g transform="translate(17.6 17.6)"><rect x="-3" y="-13.2" width="6" height="5" rx=".8" transform="rotate(0)" fill="#ececec"/><rect x="-3" y="-13.2" width="6" height="5" rx=".8" transform="rotate(45)" fill="#ececec"/><rect x="-3" y="-13.2" width="6" height="5" rx=".8" transform="rotate(90)" fill="#ececec"/><rect x="-3" y="-13.2" width="6" height="5" rx=".8" transform="rotate(135)" fill="#ececec"/><rect x="-3" y="-13.2" width="6" height="5" rx=".8" transform="rotate(180)" fill="#ececec"/><rect x="-3" y="-13.2" width="6" height="5" rx=".8" transform="rotate(225)" fill="#ececec"/><rect x="-3" y="-13.2" width="6" height="5" rx=".8" transform="rotate(270)" fill="#ececec"/><rect x="-3" y="-13.2" width="6" height="5" rx=".8" transform="rotate(315)" fill="#ececec"/><circle r="10" fill="#ececec"/><circle r="6.4" fill="#d4d4d4"/><circle r="4" fill="#c2c2c6"/></g><path d="M6.4 28.4L21.6 13.6" stroke="#7a1410" stroke-width="5.2" stroke-linecap="round"/><path d="M6.4 28.4L21.6 13.6" stroke="#de2a22" stroke-width="3.8" stroke-linecap="round"/><circle cx="6.6" cy="28.2" r="1" fill="#7a1410"/><path d="M20.4 11.4Q20.4 6.6 25.4 6L23.6 9.6L25.8 11.8L29.4 10Q28.8 15 24 15Q21.4 14.6 20.4 11.4Z" fill="#fafafa" stroke="#b8b8b8" stroke-width=".6"/><rect x="1" y="1" width="33" height="16" rx="3" fill="url(#gl)"/></svg>
<svg class="abs" style="left:5.6px;top:538.4px" width="35" height="35" viewBox="0 0 35 35"><rect x=".5" y=".5" width="34" height="34" rx="3.5" fill="url(#tg)" stroke="#27326a" stroke-width="1"/><path d="M4.6 9.4L19 5.2L30.4 22.4L15.6 30.6Q13.4 31 12.4 29.4Z" fill="#c89a52"/><path d="M4.6 9.4L19 5.2L21 8.2L7 12.8Z" fill="#e4bc78"/><path d="M12.4 29.4L15.6 30.6L30.4 22.4L29.6 20.6L14.8 27.8Z" fill="#f0e4c0"/><path d="M4.6 9.4L12.4 29.4L14.8 27.8L7 12.8Z" fill="#a87c38"/><path d="M7.6 12.4L20.4 4.4L31.6 12.6L19.6 20.6Z" fill="#6cb04a"/><path d="M7.6 12.4L20.4 4.4L22.4 5.8L10 13.8Z" fill="#9cd078" opacity=".8"/><path d="M7.6 12.4L19.6 20.6V25L7.8 16.6Z" fill="#3e8428"/><path d="M19.6 20.6L31.6 12.6V16.6L19.6 25Z" fill="#f0ecd8"/><path d="M19.6 23.8L31.6 15.6V17L19.6 25.4Z" fill="#3e8428"/><rect x="1" y="1" width="33" height="16" rx="3" fill="url(#gl)"/></svg>
<svg class="abs" style="left:5.6px;top:579.5px" width="35" height="35" viewBox="0 0 35 35"><rect x=".5" y=".5" width="34" height="34" rx="3.5" fill="url(#tact)" stroke="#dcdcdc" stroke-width="1"/><rect x="4.4" y="7.4" width="26" height="21.6" rx="1.2" fill="#d8d8d8" stroke="#f4f4f4" stroke-width=".9"/><rect x="6.4" y="9.4" width="22" height="17.4" fill="#2c2c2c"/><rect x="6.4" y="9.4" width="22" height="7" fill="#484848" opacity=".6"/><path d="M9.4 12.4L13 15L9.4 17.6" fill="none" stroke="#fff" stroke-width="1.5"/><path d="M14 19H18.4" stroke="#fff" stroke-width="1.5"/><rect x="1" y="1" width="33" height="16" rx="3" fill="url(#gl)"/></svg>
<svg class="abs" style="left:0;top:593.5px" width="4" height="7" viewBox="0 0 4 7"><path d="M0 0L3.8 3.5L0 7Z" fill="#d8d8d8"/></svg>
<svg class="abs" style="left:43px;top:593.5px" width="4" height="7" viewBox="0 0 4 7"><path d="M4 0L.2 3.5L4 7Z" fill="#d8d8d8"/></svg>
<svg class="abs" style="left:5.6px;top:620.5px" width="35" height="35" viewBox="0 0 35 35"><rect x=".5" y=".5" width="34" height="34" rx="3.5" fill="url(#tg)" stroke="#27326a" stroke-width="1"/><path d="M8.4 8.6H27.2L32.4 26.2H3Z" fill="url(#hdd)" stroke="#f8f8f8" stroke-width=".8"/><ellipse cx="16.6" cy="17.6" rx="9" ry="6.6" fill="none" stroke="#bcbcbc" stroke-width="1"/><ellipse cx="16.6" cy="17.6" rx="3.4" ry="2.2" fill="#dedede" stroke="#b4b4b4" stroke-width=".8"/><path d="M23 11.4Q19.6 12.4 18.6 16" stroke="#c4c4c4" stroke-width="1.4" fill="none"/><circle cx="9.6" cy="10.4" r=".7" fill="#999"/><circle cx="26" cy="10.4" r=".7" fill="#999"/><path d="M3 26.2H32.4V30Q32.4 30.8 31.6 30.8H3.8Q3 30.8 3 30Z" fill="#9c9c9c"/><path d="M3 26.2H32.4V27.4H3Z" fill="#d0d0d0"/><rect x="6.4" y="28" width="3.4" height="1.6" fill="#3a3a3a"/><rect x="1" y="1" width="33" height="16" rx="3" fill="url(#gl)"/></svg>
<svg class="abs" style="left:5.6px;top:661.5px" width="35" height="35" viewBox="0 0 35 35"><rect x=".5" y=".5" width="34" height="34" rx="3.5" fill="url(#tg)" stroke="#27326a" stroke-width="1"/><path d="M8.4 8.6H27.2L32.4 26.2H3Z" fill="url(#hdd)" stroke="#f8f8f8" stroke-width=".8"/><ellipse cx="16.6" cy="17.6" rx="9" ry="6.6" fill="none" stroke="#bcbcbc" stroke-width="1"/><ellipse cx="16.6" cy="17.6" rx="3.4" ry="2.2" fill="#dedede" stroke="#b4b4b4" stroke-width=".8"/><path d="M23 11.4Q19.6 12.4 18.6 16" stroke="#c4c4c4" stroke-width="1.4" fill="none"/><circle cx="9.6" cy="10.4" r=".7" fill="#999"/><circle cx="26" cy="10.4" r=".7" fill="#999"/><path d="M3 26.2H32.4V30Q32.4 30.8 31.6 30.8H3.8Q3 30.8 3 30Z" fill="#9c9c9c"/><path d="M3 26.2H32.4V27.4H3Z" fill="#d0d0d0"/><rect x="6.4" y="28" width="3.4" height="1.6" fill="#3a3a3a"/><rect x="1" y="1" width="33" height="16" rx="3" fill="url(#gl)"/></svg>
<svg class="abs" style="left:5.6px;top:702.6px" width="35" height="35" viewBox="0 0 35 35"><rect x=".5" y=".5" width="34" height="34" rx="3.5" fill="url(#tg)" stroke="#27326a" stroke-width="1"/><path d="M7.2 7.4L9.8 28.6Q10.2 31.2 17.5 31.2Q24.8 31.2 25.2 28.6L27.8 7.4Z" fill="#3a4878" opacity=".75"/><path d="M7.2 7.4L9.8 28.6Q10.2 31.2 17.5 31.2Q24.8 31.2 25.2 28.6L27.8 7.4" fill="none" stroke="#8088a8" stroke-width=".7" opacity=".8"/><path d="M13 10L14 27M22 10L21 27" stroke="#5a6690" stroke-width="1" opacity=".6"/><ellipse cx="17.5" cy="28.6" rx="7.4" ry="2.1" fill="#d4d4cc" opacity=".9"/><ellipse cx="17.5" cy="7.2" rx="10.6" ry="2.9" fill="#4a5684" stroke="#e4e4e0" stroke-width="2.2"/><path d="M7 8.8Q17.5 12.6 28 8.8" fill="none" stroke="#b4b4b0" stroke-width="1" opacity=".9"/><rect x="1" y="1" width="33" height="16" rx="3" fill="url(#gl)"/></svg>
<div class="abs" style="left:46px;top:0;width:1px;height:744px;background:#020a24"></div>
</div>

</div>
</body>
</html>
